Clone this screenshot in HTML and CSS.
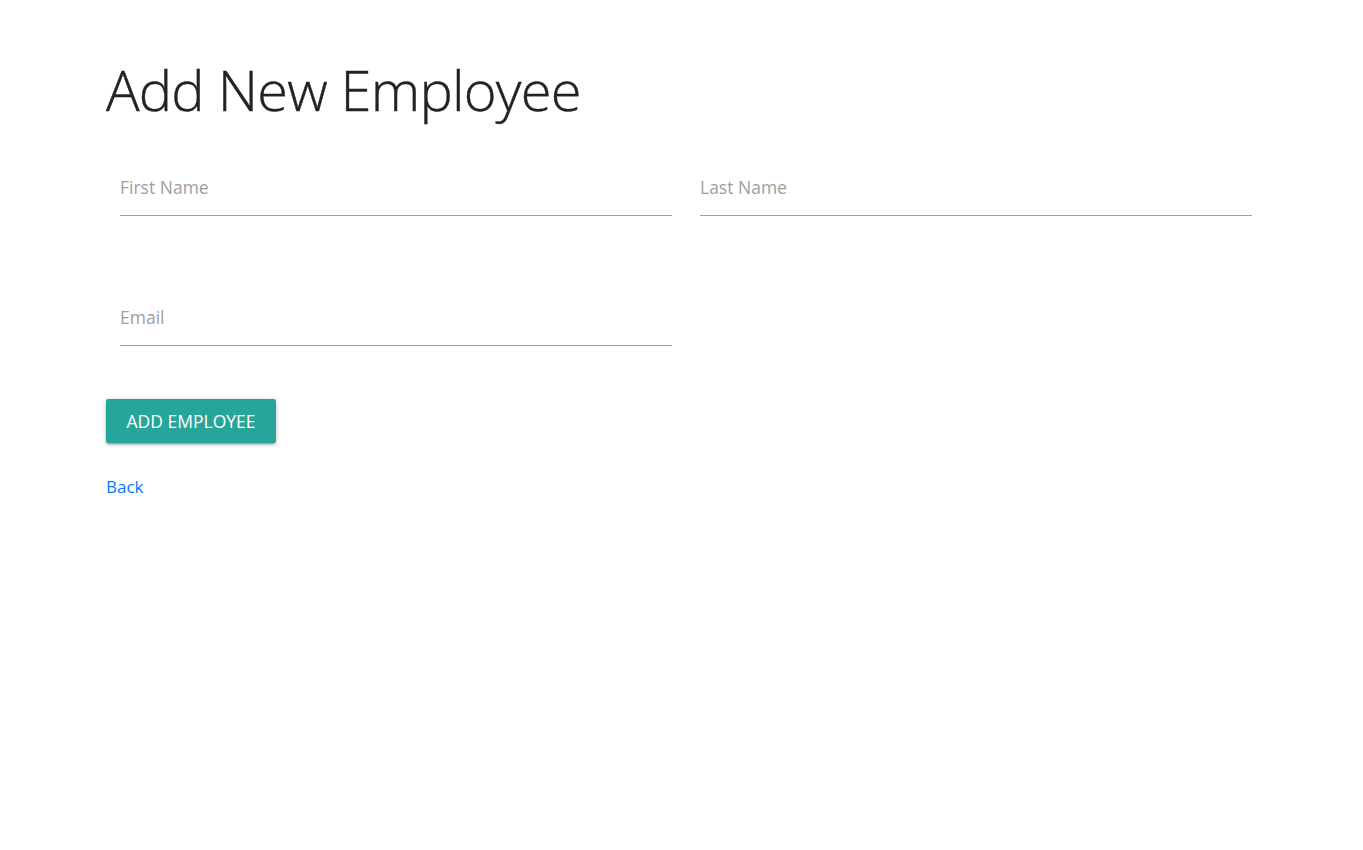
FILE: index.html
```html
<!DOCTYPE html>
<html lang="en">
<head>
<meta charset="utf-8">
<title>Add New Employee</title>
<link rel="stylesheet" href="styles.css">
</head>
<body>
<main class="container">
  <h1 class="title">Add New Employee</h1>
  <form class="form">
    <div class="row">
      <div class="field"><input class="input" type="text" placeholder="First Name"></div>
      <div class="field"><input class="input" type="text" placeholder="Last Name"></div>
    </div>
    <div class="row">
      <div class="field"><input class="input" type="email" placeholder="Email"></div>
      <div class="field"></div>
    </div>
    <button class="btn" type="button">ADD EMPLOYEE</button>
  </form>
  <a class="back" href="#">Back</a>
</main>
</body>
</html>
```
FILE: styles.css
```css
* { box-sizing: border-box; }
html, body { margin: 0; padding: 0; background: #fff; }
body {
  font-family: "Open Sans", "Noto Sans", sans-serif;
  color: #212529;
}
.container {
  padding: 56px 0 0 106px;
  width: 1266px;
}
.title {
  margin: 0;
  font-size: 56px;
  font-weight: 300;
  line-height: 1.2;
  color: #1f2226;
  letter-spacing: -0.8px;
  -webkit-text-stroke: 0.4px #1f2226;
}
.form { margin-top: 35px; }
.row {
  display: flex;
  gap: 28px;
  padding-left: 14px;
  margin-bottom: 72px;
}
.row + .row { margin-bottom: 53px; }
.field { width: 552px; }
.input {
  display: block;
  width: 100%;
  height: 58px;
  border: none;
  border-bottom: 1px solid #9e9e9e;
  padding: 0;
  font-family: inherit;
  font-size: 17.5px;
  color: #212529;
  background: transparent;
  outline: none;
}
.input::placeholder { color: #9e9e9e; }
.btn {
  display: block;
  width: 170px;
  height: 44px;
  border: none;
  border-radius: 2px;
  background: #26a69a;
  color: #fff;
  font-family: inherit;
  font-size: 17.5px;
  padding: 0;
  box-shadow: 0 2px 2px 0 rgba(0,0,0,0.14), 0 3px 1px -2px rgba(0,0,0,0.12), 0 1px 5px 0 rgba(0,0,0,0.2);
  cursor: pointer;
}
.back {
  display: inline-block;
  margin-top: 32px;
  font-size: 17px;
  color: #007bff;
  text-decoration: none;
}
```
